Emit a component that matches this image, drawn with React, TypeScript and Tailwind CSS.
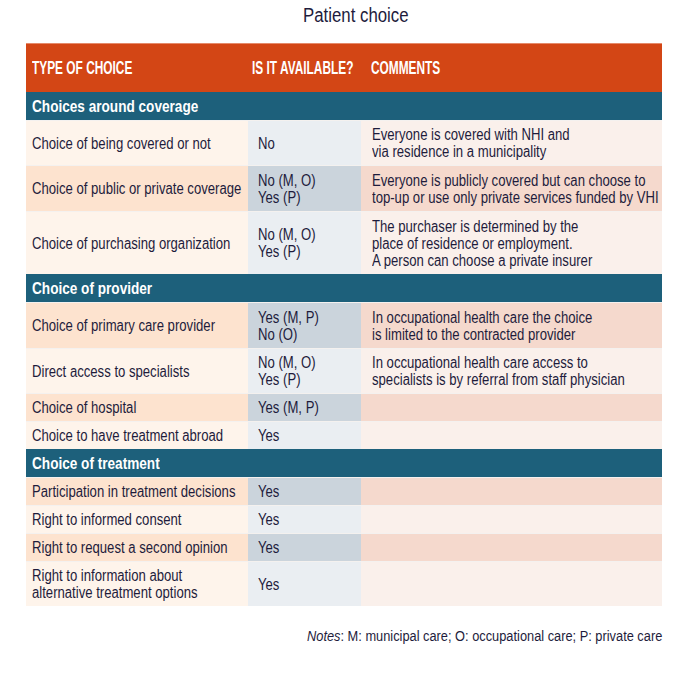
import React from "react";

type Row = {
  choice: string[];
  available: string[];
  comment: string[];
  h: string;
};

type Section = { title: string; rows: Row[] };

const font = { fontFamily: '"Liberation Sans", Arial, sans-serif' };

const sections: Section[] = [
  {
    title: "Choices around coverage",
    rows: [
      {
        choice: ["Choice of being covered or not"],
        available: ["No"],
        comment: ["Everyone is covered with NHI and", "via residence in a municipality"],
        h: "h-[45px]",
      },
      {
        choice: ["Choice of public or private coverage"],
        available: ["No (M, O)", "Yes (P)"],
        comment: ["Everyone is publicly covered but can choose to", "top-up or use only private services funded by VHI"],
        h: "h-[46px]",
      },
      {
        choice: ["Choice of purchasing organization"],
        available: ["No (M, O)", "Yes (P)"],
        comment: ["The purchaser is determined by the", "place of residence or employment.", "A person can choose a private insurer"],
        h: "h-[63px]",
      },
    ],
  },
  {
    title: "Choice of provider",
    rows: [
      {
        choice: ["Choice of primary care provider"],
        available: ["Yes (M, P)", "No (O)"],
        comment: ["In occupational health care the choice", "is limited to the contracted provider"],
        h: "h-[46px]",
      },
      {
        choice: ["Direct access to specialists"],
        available: ["No (M, O)", "Yes (P)"],
        comment: ["In occupational health care access to", "specialists is by referral from staff physician"],
        h: "h-[45px]",
      },
      { choice: ["Choice of hospital"], available: ["Yes (M, P)"], comment: [], h: "h-[28px]" },
      { choice: ["Choice to have treatment abroad"], available: ["Yes"], comment: [], h: "h-[28px]" },
    ],
  },
  {
    title: "Choice of treatment",
    rows: [
      { choice: ["Participation in treatment decisions"], available: ["Yes"], comment: [], h: "h-[28px]" },
      { choice: ["Right to informed consent"], available: ["Yes"], comment: [], h: "h-[28px]" },
      { choice: ["Right to request a second opinion"], available: ["Yes"], comment: [], h: "h-[28px]" },
      {
        choice: ["Right to information about", "alternative treatment options"],
        available: ["Yes"],
        comment: [],
        h: "h-[45px]",
      },
    ],
  },
];

// condensed look: no narrow font installed, so squeeze each line
const Lines = ({ lines }: { lines: string[] }) => (
  <>
    {lines.map((l, i) => (
      <div key={i} className="whitespace-nowrap">
        <span className="inline-block origin-left scale-x-[0.82]">{l}</span>
      </div>
    ))}
  </>
);

const Head = ({ children, className }: { children: React.ReactNode; className: string }) => (
  <div className={`whitespace-nowrap ${className}`}>
    <span className="inline-block origin-left scale-x-[0.66]">{children}</span>
  </div>
);

const cols = "grid grid-cols-[222px_113px_minmax(0,1fr)]";

const App: React.FC = () => {
  return (
    <div className="w-[694px] h-[673px] bg-white text-[#1e1c3c] overflow-hidden" style={font}>
      <div className="pt-[3px] pl-[18px] w-[694px] text-center text-[20px] leading-[24px] whitespace-nowrap">
        <span className="inline-block scale-x-[0.84]">Patient choice</span>
      </div>

      <div className="ml-[26px] mt-[16px] w-[636px] text-[16px] leading-[17px]">
        <div className={`${cols} h-[49px] items-center bg-[#d34615] border-t border-[#e58a6a] font-bold text-white text-[18px] uppercase`}>
          <Head className="pl-[6px]">Type of choice</Head>
          <Head className="pl-[4px]">Is it available?</Head>
          <Head className="pl-[10px]">Comments</Head>
        </div>

        {sections.map((s, si) => (
          <div key={s.title}>
            <div className="h-[28px] flex items-center pl-[6px] bg-[#1d607b] text-white font-bold text-[17px] whitespace-nowrap">
              <span className="inline-block origin-left scale-x-[0.8]">{s.title}</span>
            </div>
            {s.rows.map((r, ri) => {
              const dark = si === 0 ? ri % 2 === 1 : ri % 2 === 0;
              return (
                <div key={ri} className={`${cols} ${r.h} border-t border-[#f4f1ef]`}>
                  <div className={`flex flex-col justify-center pl-[6px] min-w-0 ${dark ? "bg-[#fde3cf]" : "bg-[#fef4eb]"}`}>
                    <Lines lines={r.choice} />
                  </div>
                  <div className={`flex flex-col justify-center pl-[10px] min-w-0 ${dark ? "bg-[#cbd4dc]" : "bg-[#eaeef2]"}`}>
                    <Lines lines={r.available} />
                  </div>
                  <div className={`flex flex-col justify-center pl-[11px] min-w-0 ${dark ? "bg-[#f5d9cd]" : "bg-[#faf0eb]"}`}>
                    <Lines lines={r.comment} />
                  </div>
                </div>
              );
            })}
          </div>
        ))}

        <div className="mt-[22px] text-right text-[14px] whitespace-nowrap">
          <span className="inline-block origin-right scale-x-[0.915]">
            <span className="italic">Notes</span>: M: municipal care; O: occupational care; P: private care
          </span>
        </div>
      </div>
    </div>
  );
};

export default App;
